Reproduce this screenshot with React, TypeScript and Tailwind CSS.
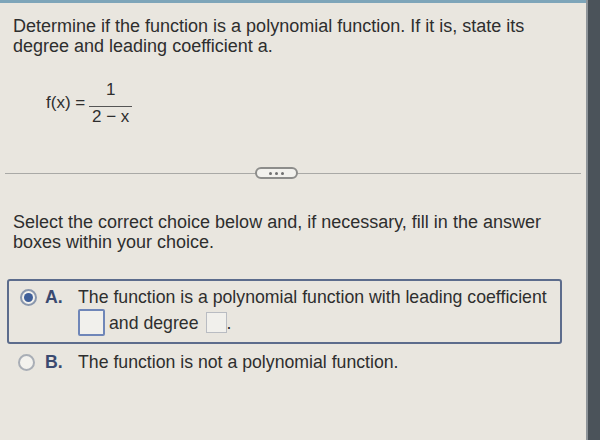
import React from "react";

const Radio = ({ checked }: { checked?: boolean }) => (
  <span
    className={
      "flex h-[17px] w-[17px] shrink-0 items-center justify-center rounded-full border-2 bg-[#f3f2ee] " +
      (checked ? "border-[#8a97ad]" : "border-[#a9aeb6]")
    }
  >
    {checked && <span className="h-[9px] w-[9px] rounded-full bg-[#3f5f99]" />}
  </span>
);

const App = () => {
  return (
    <div
      className="flex h-[440px] w-[600px] overflow-hidden bg-[#e9e6df] text-[#2e2e2e]"
      style={{ fontFamily: '"Liberation Sans", Arial, sans-serif' }}
    >
      <div className="flex flex-1 flex-col">
        <div className="h-[3px] bg-[#7ea5b9]" />

        <p className="whitespace-nowrap px-[13px] pt-[13px] text-[18px] leading-[20px]">
          Determine if the function is a polynomial function. If it is, state its
          <br />
          degree and leading coefficient a.
        </p>

        {/* f(x) = 1 / (2 - x) */}
        <div className="mt-[23px] flex items-center pl-[46px] text-[17px]">
          <span>f(x) =</span>
          <span className="ml-[4px] flex flex-col items-center">
            <span className="pb-[5px] leading-[22px]">1</span>
            <span className="h-px w-[43px] bg-[#555]" />
            <span className="leading-[20px]">2 − x</span>
          </span>
        </div>

        {/* divider with more button */}
        <div className="relative mx-[5px] mt-[40px] flex h-[12px] items-center">
          <div className="h-px flex-1 bg-[#a9a9a6]" />
          <div className="absolute left-[250px] flex h-[12px] w-[43px] items-center justify-center gap-[3px] rounded-full border-2 border-[#8d8d8b] bg-[#f2f1ed]">
            <span className="h-[3px] w-[3px] rounded-full bg-[#707070]" />
            <span className="h-[3px] w-[3px] rounded-full bg-[#707070]" />
            <span className="h-[3px] w-[3px] rounded-full bg-[#707070]" />
          </div>
        </div>

        <p className="whitespace-nowrap px-[13px] pt-[33px] text-[18px] leading-[20px]">
          Select the correct choice below and, if necessary, fill in the answer
          <br />
          boxes within your choice.
        </p>

        {/* choice A */}
        <div className="ml-[7px] mr-[24px] mt-[27px] flex rounded-[3px] border-2 border-[#5c6c8c] pb-[6px] pl-[11px] pt-[6px]">
          <div className="pt-[2px]">
            <Radio checked />
          </div>
          <div className="ml-[8px] w-[33px] text-[17.7px] font-bold leading-[20px] text-[#3a4a70]">
            A.
          </div>
          <div className="whitespace-nowrap text-[17.7px] leading-[20px]">
            <div>The function is a polynomial function with leading coefficient</div>
            <div className="mt-[2px] flex items-center">
              <span className="h-[27px] w-[27px] rounded-[2px] border-2 border-[#6f86b8] bg-[#f1f0ec]" />
              <span className="ml-[4px]">and degree</span>
              <span className="ml-[7px] h-[21px] w-[21px] border border-[#b9bcc2] bg-[#f1f0ec]" />
              <span>.</span>
            </div>
          </div>
        </div>

        {/* choice B */}
        <div className="ml-[18px] mt-[8px] flex items-center">
          <Radio />
          <div className="ml-[10px] w-[33px] text-[17.7px] font-bold leading-[20px] text-[#3a4a70]">
            B.
          </div>
          <div className="text-[17.7px] leading-[20px]">The function is not a polynomial function.</div>
        </div>
      </div>

      <div className="w-[14px] border-l-2 border-[#8e9499] bg-[#4b535a]" />
    </div>
  );
};

export default App;
